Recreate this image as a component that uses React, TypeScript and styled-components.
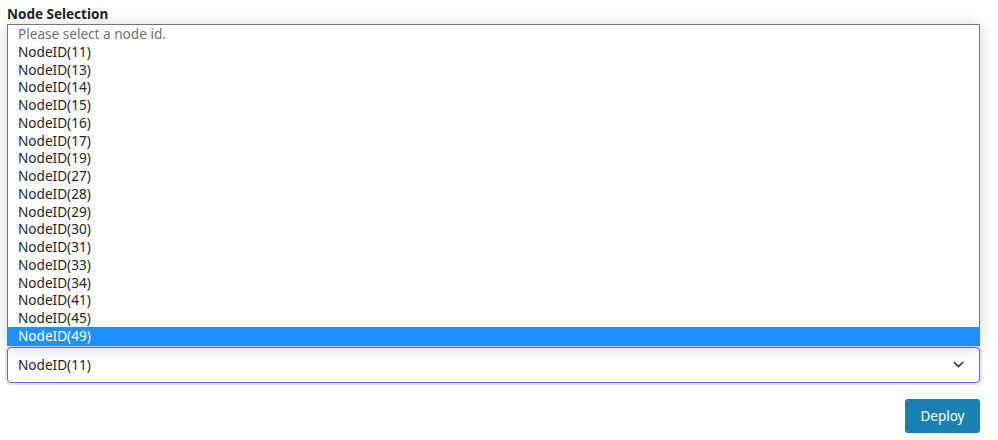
import React from 'react'
import styled, { createGlobalStyle } from 'styled-components'
import { ChevronDown } from 'lucide-react'

const GlobalStyle = createGlobalStyle`
  html, body {
    margin: 0;
    background: #fff;
    font-family: "Noto Sans", "DejaVu Sans", sans-serif;
    color: #212529;
  }
`

const nodes = [11, 13, 14, 15, 16, 17, 19, 27, 28, 29, 30, 31, 33, 34, 41, 45, 49]

export default function App() {
  return (
    <Page>
      <GlobalStyle />
      <Label>Node Selection</Label>
      <ListBox>
        <Option muted>Please select a node id.</Option>
        {nodes.map((id) => (
          <Option key={id} active={id === 49}>NodeID({id})</Option>
        ))}
      </ListBox>
      <Select>
        <span>NodeID(11)</span>
        <ChevronDown size={17} strokeWidth={2} color="#343a40" />
      </Select>
      <Actions>
        <Button>Deploy</Button>
      </Actions>
    </Page>
  )
}

const Page = styled.div`
  width: 973px;
  padding: 4px 0 0 7px;
  display: flex;
  flex-direction: column;
`

const Label = styled.label`
  font-size: 13.5px;
  font-weight: 700;
  line-height: 20px;
  color: #212529;
`

const ListBox = styled.div`
  border: 1px solid #767676;
  background: #fff;
  box-shadow: 0 2px 14px rgba(0, 0, 0, 0.18);
  display: flex;
  flex-direction: column;
  position: relative;
  z-index: 2;
`

const Option = styled.div<{ muted?: boolean; active?: boolean }>`
  height: 17.78px;
  line-height: 17.78px;
  padding-left: 10px;
  font-size: 13.6px;
  color: ${(p) => (p.active ? '#fff' : p.muted ? '#6c757d' : '#212529')};
  background: ${(p) => (p.active ? '#1e90ff' : 'transparent')};
`

const Select = styled.div`
  margin-top: 1px;
  height: 36px;
  box-sizing: border-box;
  border: 1px solid #5b6fd6;
  border-radius: 4px;
  box-shadow: 0 0 0 2px rgba(91, 111, 214, 0.18);
  display: flex;
  align-items: center;
  justify-content: space-between;
  padding: 0 12px 0 10px;
  font-size: 13.6px;
  color: #212529;
`

const Actions = styled.div`
  display: flex;
  justify-content: flex-end;
  margin-top: 16px;
`

const Button = styled.button`
  width: 75px;
  height: 34px;
  border: none;
  border-radius: 3px;
  background: #1a82b3;
  color: #fff;
  font-family: inherit;
  font-size: 13.5px;
  cursor: pointer;
`
